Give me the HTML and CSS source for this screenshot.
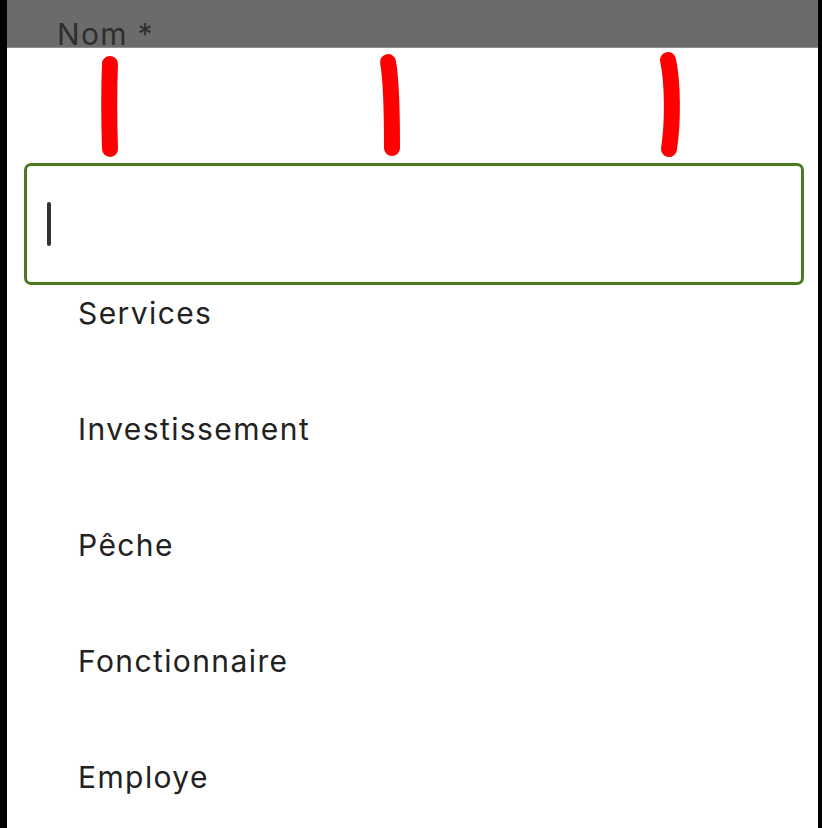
FILE: index.html
```html
<!DOCTYPE html>
<html lang="fr">
<head>
<meta charset="utf-8">
<title>Nom</title>
<link rel="stylesheet" href="styles.css">
</head>
<body>
<div class="frame">
  <header class="topbar"><span class="label">Nom *</span></header>
  <main class="sheet">
    <svg class="marks" width="811" height="120" viewBox="0 0 811 120" aria-hidden="true">
      <path d="M103 16 C102 40 102 70 103 101" />
      <path d="M381 14 C384 30 385 65 385 100" />
      <path d="M661 12 C666 35 666 75 662 101" />
    </svg>
    <div class="field"><span class="caret"></span></div>
    <ul class="options">
      <li>Services</li>
      <li>Investissement</li>
      <li>Pêche</li>
      <li>Fonctionnaire</li>
      <li>Employe</li>
    </ul>
  </main>
</div>
</body>
</html>
```
FILE: styles.css
```css
html, body {
  margin: 0;
  padding: 0;
  background: #000;
  height: 100%;
  overflow: hidden;
}
body {
  font-family: Inter, "Noto Sans", sans-serif;
}
.frame {
  margin: 0 4px 0 7px;
  height: 828px;
  display: flex;
  flex-direction: column;
  background: #fff;
}
.topbar {
  height: 48px;
  background: #6b6b6b;
  border-bottom: 1px solid #8a8a8a;
  box-sizing: border-box;
  padding-left: 50px;
  display: flex;
  align-items: flex-end;
}
.label {
  font-size: 30px;
  line-height: 36px;
  letter-spacing: 1.3px;
  color: #2e2e2e;
  margin-bottom: -5px;
}
.sheet {
  flex: 1;
  position: relative;
  background: #fff;
  padding-top: 115px;
  overflow: hidden;
}
.marks {
  position: absolute;
  left: 0;
  top: 0;
}
.marks path {
  fill: none;
  stroke: #ff0000;
  stroke-width: 16;
  stroke-linecap: round;
}
.field {
  margin: 0 14px 0 17px;
  height: 122px;
  box-sizing: border-box;
  border: 3px solid #4d7a1f;
  border-radius: 7px;
  display: flex;
  align-items: center;
  padding-left: 20px;
}
.caret {
  width: 4px;
  height: 44px;
  border-radius: 2px;
  background: #333;
}
.options {
  list-style: none;
  margin: 10px 0 0;
  padding: 0 0 0 71px;
}
.options li {
  font-size: 30px;
  line-height: 36px;
  letter-spacing: 1.4px;
  color: #222;
  margin-bottom: 80px;
}
```
